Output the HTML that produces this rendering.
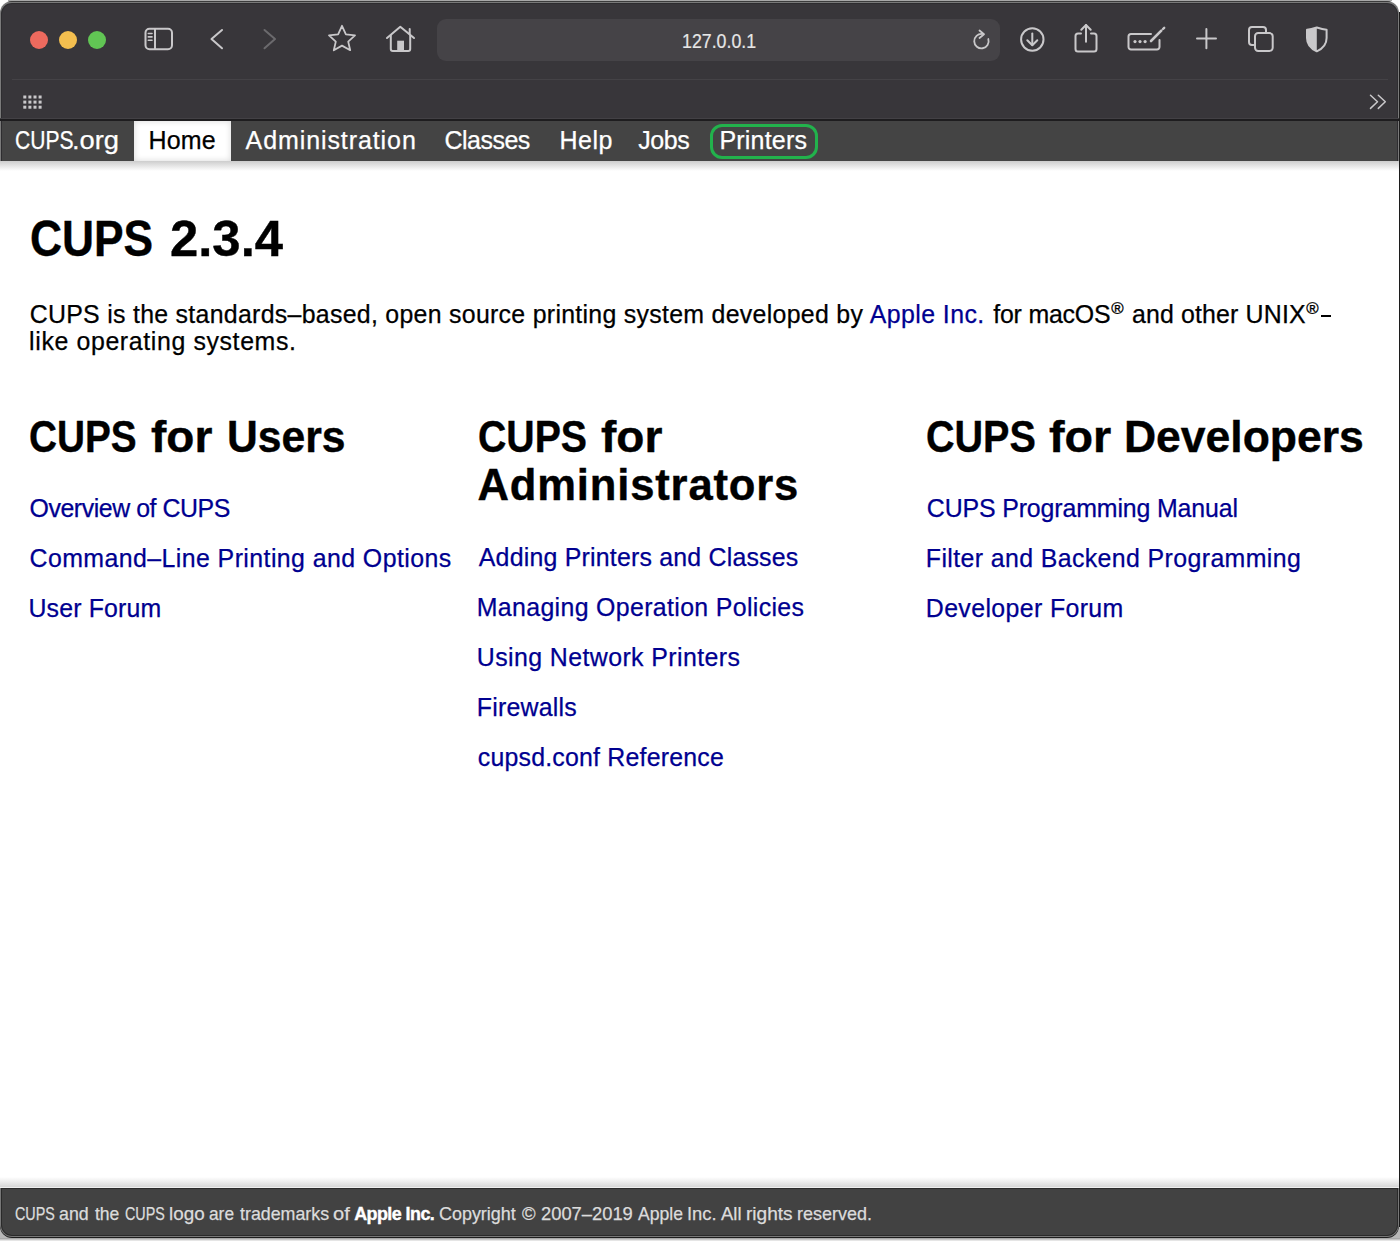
<!DOCTYPE html>
<html><head><meta charset="utf-8"><style>
html,body{margin:0;padding:0;width:1400px;height:1241px;overflow:hidden;background:#fff;}
body{position:relative;font-family:"Liberation Sans",sans-serif;}
.t{position:absolute;white-space:nowrap;line-height:normal;-webkit-text-stroke:0.2px currentColor;}
.r{position:absolute;}
svg{position:absolute;left:0;top:0;}
</style></head><body>

<div class="r" style="left:8px;top:0;width:1384px;height:1px;background:#a8a8a8;"></div>
<div class="r" style="left:0;top:1238px;width:1400px;height:3px;background:linear-gradient(#9a9a9a,#f4f4f4);"></div>
<div class="r" style="left:0;top:1215px;width:20px;height:23px;background:#b8b8b8;"></div>
<div class="r" style="left:1380px;top:1215px;width:20px;height:23px;background:#b8b8b8;"></div>
<div class="r" style="left:1399px;top:12px;width:1px;height:1215px;background:#1c1c1c;"></div>
<!-- top chrome -->
<div class="r" style="left:0;top:1px;width:1399px;height:160px;border-radius:12px 12px 0 0;background:#7a7a7a;overflow:hidden;">
  <div class="r" style="left:0;top:0;width:1399px;height:1px;background:#3c3c3c;"></div>
  <div class="r" style="left:1px;top:2px;width:1397px;height:158px;border-radius:11px 11px 0 0;background:#2e2d30;"></div>
  <div class="r" style="left:2px;top:3px;width:1395px;height:157px;border-radius:10px 10px 0 0;background:#38363a;"></div>
  <div class="r" style="left:0;top:117px;width:1399px;height:1px;background:#434145;"></div>
  <div class="r" style="left:0;top:118px;width:1399px;height:2px;background:#1e1d1f;"></div>
  <div class="r" style="left:2px;top:120px;width:1395px;height:40px;background:#444444;"></div>
</div>
<div class="r" style="left:0;top:161px;width:1399px;height:10px;background:linear-gradient(#cdcdcd,rgba(255,255,255,0));"></div>
<div class="r" style="left:0;top:1177px;width:1399px;height:10px;background:linear-gradient(rgba(255,255,255,0),#d6d6d6);"></div>
<!-- footer -->
<div class="r" style="left:0;top:1187px;width:1399px;height:51px;border-radius:0 0 12px 12px;background:#1e1e1e;overflow:hidden;">
  <div class="r" style="left:0;top:0;width:1399px;height:1px;background:#eeeeee;"></div>
  <div class="r" style="left:0;top:1px;width:1399px;height:49px;border-radius:0 0 12px 12px;background:#777;"></div>
  <div class="r" style="left:1px;top:1px;width:1397px;height:48px;border-radius:0 0 11px 11px;background:#2a2a2a;"></div>
  <div class="r" style="left:2px;top:2px;width:1395px;height:46px;border-radius:0 0 10px 10px;background:#424242;"></div>
</div>
<div class="r" style="left:12px;top:78.5px;width:1376px;height:1.5px;background:#444246;"></div>
<div class="r" style="left:437px;top:19px;width:563px;height:42px;border-radius:9px;background:#454347;"></div>
<div class="r" style="left:29.5px;top:30.8px;width:18px;height:18px;border-radius:50%;background:#ed6a5e;"></div>
<div class="r" style="left:58.900000000000006px;top:30.8px;width:18px;height:18px;border-radius:50%;background:#f4bf4f;"></div>
<div class="r" style="left:88.4px;top:30.8px;width:18px;height:18px;border-radius:50%;background:#61c554;"></div>
<div class="r" style="left:134px;top:121px;width:97px;height:40px;background:#fff;box-shadow:inset 0 0 6px #d8d8d8;"></div>
<div class="r" style="left:710px;top:124px;width:102px;height:28.5px;border:3px solid #22b24c;border-radius:12px;"></div>
<svg width="1400" height="125" viewBox="0 0 1400 125" fill="none" stroke="#c9c8ca" stroke-width="2" stroke-linecap="round" stroke-linejoin="round">
 <rect x="145.5" y="28.8" width="26.5" height="20.5" rx="4"/>
 <line x1="155" y1="29" x2="155" y2="49"/>
 <g stroke-width="1.6"><line x1="148.3" y1="33.5" x2="152" y2="33.5"/><line x1="148.3" y1="36.9" x2="152" y2="36.9"/><line x1="148.3" y1="40.2" x2="152" y2="40.2"/></g>
 <polyline points="222,30 211.5,39 222,48.3"/>
 <polyline points="264.5,30 275,39 264.5,48.3" stroke="#6b6a6d"/>
 <polygon stroke-width="1.8" points="342,25.8 345.9,34.4 355,35.4 348.2,41.6 350.2,50.2 342,45.6 333.8,50.2 335.8,41.6 329,35.4 338.1,34.4"/>
 <polyline points="387,38 400.3,26.8 414,38"/>
 <path d="M390.8 35.5 V49 a2 2 0 0 0 2 2 H408.2 a2 2 0 0 0 2 -2 V35.5"/>
 <line x1="409.7" y1="29" x2="409.7" y2="34"/>
 <rect x="397.2" y="40.7" width="6.8" height="10" fill="#c9c8ca" stroke="none"/>
 <path d="M982.2 34 A7.2 7.2 0 1 0 988.3 39" stroke-width="1.8"/>
 <polyline points="979.5,30.5 984,34.3 979.5,38" stroke-width="1.8"/>
 <circle cx="1032.3" cy="39.5" r="11.2"/>
 <line x1="1032.3" y1="33.5" x2="1032.3" y2="45"/>
 <polyline points="1027.3,40.3 1032.3,45.3 1037.3,40.3"/>
 <path d="M1081 33.5 H1078 a2.5 2.5 0 0 0 -2.5 2.5 V49 a2.5 2.5 0 0 0 2.5 2.5 H1094 a2.5 2.5 0 0 0 2.5 -2.5 V36 a2.5 2.5 0 0 0 -2.5 -2.5 H1091"/>
 <line x1="1086" y1="25" x2="1086" y2="41.8"/>
 <polyline points="1081.3,29.8 1086,25 1090.7,29.8"/>
 <path d="M1151 34 H1131 a2.5 2.5 0 0 0 -2.5 2.5 V47 a2.5 2.5 0 0 0 2.5 2.5 H1157 a2.5 2.5 0 0 0 2.5 -2.5 V40"/>
 <line x1="1151" y1="41" x2="1161.3" y2="30.7" stroke-width="2.6"/><line x1="1163" y1="29" x2="1164.2" y2="27.8" stroke-width="2.4"/>
 <g fill="#c9c8ca" stroke="none"><circle cx="1135" cy="41.6" r="1.6"/><circle cx="1140" cy="41.6" r="1.6"/><circle cx="1145.1" cy="41.6" r="1.6"/></g>
 <line x1="1197" y1="38.5" x2="1216" y2="38.5"/>
 <line x1="1206.4" y1="29" x2="1206.4" y2="48.2"/>
 <path d="M1253.5 44.9 H1252 a3 3 0 0 1 -3 -3 V30.1 a3 3 0 0 1 3 -3 H1263 a3 3 0 0 1 3 3 V32"/>
 <rect x="1255" y="33.1" width="17.7" height="17.8" rx="3.2"/>
 <path d="M1316.8 27.5 C1313 28.8 1309.5 29.6 1307 29.8 V38 C1307 44 1310.5 48.5 1316.8 51.3 C1323 48.5 1326.6 44 1326.6 38 V29.8 C1324 29.6 1320.6 28.8 1316.8 27.5 Z"/>
 <path d="M1316.8 27.5 C1313 28.8 1309.5 29.6 1307 29.8 V38 C1307 44 1310.5 48.5 1316.8 51.3 Z" fill="#c9c8ca" stroke="none"/>
 <g fill="#c9c8ca" stroke="none"><rect x="23.3" y="95.5" width="3" height="3"/><rect x="28.4" y="95.5" width="3" height="3"/><rect x="33.5" y="95.5" width="3" height="3"/><rect x="38.6" y="95.5" width="3" height="3"/><rect x="23.3" y="100.6" width="3" height="3"/><rect x="28.4" y="100.6" width="3" height="3"/><rect x="33.5" y="100.6" width="3" height="3"/><rect x="38.6" y="100.6" width="3" height="3"/><rect x="23.3" y="105.7" width="3" height="3"/><rect x="28.4" y="105.7" width="3" height="3"/><rect x="33.5" y="105.7" width="3" height="3"/><rect x="38.6" y="105.7" width="3" height="3"/></g>
 <g stroke-width="1.5"><polyline points="1370.5,95.2 1377.5,101.8 1370.5,108.4"/><polyline points="1378.3,95.2 1385.3,101.8 1378.3,108.4"/></g>
</svg>
<div class="t" style="left:14.76px;top:126.0px;font-size:25px;font-weight:normal;color:#fff;-webkit-text-stroke:0.25px currentColor;transform:scaleX(0.8433);transform-origin:0 0;">CUPS</div>
<div class="t" style="left:72.11px;top:126.0px;font-size:25px;font-weight:normal;color:#fff;-webkit-text-stroke:0.25px currentColor;transform:scaleX(1.0925);transform-origin:0 0;">.org</div>
<div class="t" style="left:245.6px;top:126.0px;font-size:25px;font-weight:normal;letter-spacing:0.908px;color:#fff;-webkit-text-stroke:0.25px currentColor;">Administration</div>
<div class="t" style="left:444.5px;top:126.0px;font-size:25px;font-weight:normal;letter-spacing:-0.517px;color:#fff;-webkit-text-stroke:0.25px currentColor;">Classes</div>
<div class="t" style="left:559.5px;top:126.0px;font-size:25px;font-weight:normal;letter-spacing:0.467px;color:#fff;-webkit-text-stroke:0.25px currentColor;">Help</div>
<div class="t" style="left:638.2px;top:126.0px;font-size:25px;font-weight:normal;letter-spacing:-0.433px;color:#fff;-webkit-text-stroke:0.25px currentColor;">Jobs</div>
<div class="t" style="left:719.5px;top:126.0px;font-size:25px;font-weight:normal;letter-spacing:0.186px;color:#fff;-webkit-text-stroke:0.25px currentColor;">Printers</div>
<div class="t" style="left:148.4px;top:126.0px;font-size:25px;font-weight:normal;letter-spacing:0.2px;color:#000;-webkit-text-stroke:0.25px currentColor;">Home</div>
<div class="t" style="left:681.8240000000001px;top:30.0px;font-size:20.3px;color:#e6e6e6;transform:scaleX(0.876);transform-origin:0 0;">127.0.0.1</div>
<div class="t" style="left:29.81px;top:209.7px;font-size:49.4px;font-weight:bold;color:#000;-webkit-text-stroke:0.4px currentColor;transform:scaleX(0.897);transform-origin:0 0;">CUPS</div>
<div class="t" style="left:169.64px;top:209.7px;font-size:49.4px;font-weight:bold;color:#000;-webkit-text-stroke:0.4px currentColor;transform:scaleX(1.0287);transform-origin:0 0;">2.3.4</div>
<div class="t" style="left:29.7px;top:300.0px;font-size:24.9px;font-weight:normal;letter-spacing:0.288px;color:#000;-webkit-text-stroke:0.25px currentColor;">CUPS is the standards–based, open source printing system developed by</div>
<div class="t" style="left:869.7px;top:300.0px;font-size:24.9px;font-weight:normal;letter-spacing:0.433px;color:#000090;-webkit-text-stroke:0.25px currentColor;">Apple Inc.</div>
<div class="t" style="left:993.2px;top:300.0px;font-size:24.9px;font-weight:normal;letter-spacing:-0.188px;color:#000;-webkit-text-stroke:0.25px currentColor;">for macOS</div>
<div class="t" style="left:1131.9px;top:300.0px;font-size:24.9px;font-weight:normal;letter-spacing:0.162px;color:#000;-webkit-text-stroke:0.25px currentColor;">and other UNIX</div>
<div class="t" style="left:29.1px;top:326.5px;font-size:24.9px;font-weight:normal;letter-spacing:0.623px;color:#000;-webkit-text-stroke:0.25px currentColor;">like operating systems.</div>
<div class="t" style="left:1111.2px;top:299.2px;font-size:16.8px;color:#000;-webkit-text-stroke:0.35px #000;">®</div>
<div class="t" style="left:1306.2px;top:299.2px;font-size:16.8px;color:#000;-webkit-text-stroke:0.35px #000;">®</div>
<div class="r" style="left:1321px;top:315.3px;width:10.3px;height:2px;background:#000;"></div>
<div class="t" style="left:29.12px;top:412.7px;font-size:43.6px;font-weight:bold;color:#000;-webkit-text-stroke:0.4px currentColor;transform:scaleX(0.889);transform-origin:0 0;">CUPS</div>
<div class="t" style="left:151.35px;top:412.7px;font-size:43.6px;font-weight:bold;color:#000;-webkit-text-stroke:0.4px currentColor;transform:scaleX(1.0544);transform-origin:0 0;">for</div>
<div class="t" style="left:227.27px;top:412.7px;font-size:43.6px;font-weight:bold;color:#000;-webkit-text-stroke:0.4px currentColor;transform:scaleX(0.9778);transform-origin:0 0;">Users</div>
<div class="t" style="left:477.60px;top:412.7px;font-size:43.6px;font-weight:bold;color:#000;-webkit-text-stroke:0.4px currentColor;transform:scaleX(0.9);transform-origin:0 0;">CUPS</div>
<div class="t" style="left:600.94px;top:412.7px;font-size:43.6px;font-weight:bold;color:#000;-webkit-text-stroke:0.4px currentColor;transform:scaleX(1.0561);transform-origin:0 0;">for</div>
<div class="t" style="left:926.19px;top:412.7px;font-size:43.6px;font-weight:bold;color:#000;-webkit-text-stroke:0.4px currentColor;transform:scaleX(0.9068);transform-origin:0 0;">CUPS</div>
<div class="t" style="left:1049.13px;top:412.7px;font-size:43.6px;font-weight:bold;color:#000;-webkit-text-stroke:0.4px currentColor;transform:scaleX(1.0719);transform-origin:0 0;">for</div>
<div class="t" style="left:1124.24px;top:412.7px;font-size:43.6px;font-weight:bold;color:#000;-webkit-text-stroke:0.4px currentColor;transform:scaleX(1.0204);transform-origin:0 0;">Developers</div>
<div class="t" style="left:477.4px;top:461.4px;font-size:43.6px;font-weight:bold;letter-spacing:0.838px;color:#000;-webkit-text-stroke:0.4px currentColor;">Administrators</div>
<div class="t" style="left:29.5px;top:494.4px;font-size:24.9px;font-weight:normal;letter-spacing:-0.44px;color:#000090;-webkit-text-stroke:0.25px currentColor;">Overview of CUPS</div>
<div class="t" style="left:29.5px;top:544.4px;font-size:24.9px;font-weight:normal;letter-spacing:0.422px;color:#000090;-webkit-text-stroke:0.25px currentColor;">Command–Line Printing and Options</div>
<div class="t" style="left:28.5px;top:594.4px;font-size:24.9px;font-weight:normal;letter-spacing:0.144px;color:#000090;-webkit-text-stroke:0.25px currentColor;">User Forum</div>
<div class="t" style="left:478.8px;top:543.4px;font-size:24.9px;font-weight:normal;letter-spacing:0.208px;color:#000090;-webkit-text-stroke:0.25px currentColor;">Adding Printers and Classes</div>
<div class="t" style="left:476.8px;top:593.4px;font-size:24.9px;font-weight:normal;letter-spacing:0.342px;color:#000090;-webkit-text-stroke:0.25px currentColor;">Managing Operation Policies</div>
<div class="t" style="left:476.8px;top:643.4px;font-size:24.9px;font-weight:normal;letter-spacing:0.41px;color:#000090;-webkit-text-stroke:0.25px currentColor;">Using Network Printers</div>
<div class="t" style="left:476.8px;top:693.4px;font-size:24.9px;font-weight:normal;letter-spacing:0.2px;color:#000090;-webkit-text-stroke:0.25px currentColor;">Firewalls</div>
<div class="t" style="left:477.8px;top:743.4px;font-size:24.9px;font-weight:normal;letter-spacing:0.205px;color:#000090;-webkit-text-stroke:0.25px currentColor;">cupsd.conf Reference</div>
<div class="t" style="left:926.8px;top:494.4px;font-size:24.9px;font-weight:normal;letter-spacing:-0.127px;color:#000090;-webkit-text-stroke:0.25px currentColor;">CUPS Programming Manual</div>
<div class="t" style="left:925.8px;top:544.4px;font-size:24.9px;font-weight:normal;letter-spacing:0.386px;color:#000090;-webkit-text-stroke:0.25px currentColor;">Filter and Backend Programming</div>
<div class="t" style="left:925.8px;top:594.4px;font-size:24.9px;font-weight:normal;letter-spacing:0.371px;color:#000090;-webkit-text-stroke:0.25px currentColor;">Developer Forum</div>
<div class="t" style="left:14.70px;top:1203.6px;font-size:17.9px;font-weight:normal;color:#dcdcdc;-webkit-text-stroke:0.25px currentColor;transform:scaleX(0.8021);transform-origin:0 0;">CUPS</div>
<div class="t" style="left:59.01px;top:1203.6px;font-size:17.9px;font-weight:normal;color:#dcdcdc;-webkit-text-stroke:0.25px currentColor;transform:scaleX(0.9929);transform-origin:0 0;">and</div>
<div class="t" style="left:94.90px;top:1203.6px;font-size:17.9px;font-weight:normal;color:#dcdcdc;-webkit-text-stroke:0.25px currentColor;transform:scaleX(0.9792);transform-origin:0 0;">the</div>
<div class="t" style="left:124.70px;top:1203.6px;font-size:17.9px;font-weight:normal;color:#dcdcdc;-webkit-text-stroke:0.25px currentColor;transform:scaleX(0.8021);transform-origin:0 0;">CUPS</div>
<div class="t" style="left:169.25px;top:1203.6px;font-size:17.9px;font-weight:normal;color:#dcdcdc;-webkit-text-stroke:0.25px currentColor;transform:scaleX(1.0531);transform-origin:0 0;">logo</div>
<div class="t" style="left:209.43px;top:1203.6px;font-size:17.9px;font-weight:normal;color:#dcdcdc;-webkit-text-stroke:0.25px currentColor;transform:scaleX(0.9667);transform-origin:0 0;">are</div>
<div class="t" style="left:239.60px;top:1203.6px;font-size:17.9px;font-weight:normal;color:#dcdcdc;-webkit-text-stroke:0.25px currentColor;transform:scaleX(0.9955);transform-origin:0 0;">trademarks</div>
<div class="t" style="left:333.18px;top:1203.6px;font-size:17.9px;font-weight:normal;color:#dcdcdc;-webkit-text-stroke:0.25px currentColor;transform:scaleX(1.1214);transform-origin:0 0;">of</div>
<div class="t" style="left:438.80px;top:1203.6px;font-size:17.9px;font-weight:normal;color:#dcdcdc;-webkit-text-stroke:0.25px currentColor;transform:scaleX(1.0026);transform-origin:0 0;">Copyright</div>
<div class="t" style="left:522.00px;top:1203.6px;font-size:17.9px;font-weight:normal;color:#dcdcdc;-webkit-text-stroke:0.25px currentColor;transform:scaleX(1.0308);transform-origin:0 0;">©</div>
<div class="t" style="left:540.58px;top:1203.6px;font-size:17.9px;font-weight:normal;color:#dcdcdc;-webkit-text-stroke:0.25px currentColor;transform:scaleX(1.025);transform-origin:0 0;">2007–2019</div>
<div class="t" style="left:637.90px;top:1203.6px;font-size:17.9px;font-weight:normal;color:#dcdcdc;-webkit-text-stroke:0.25px currentColor;transform:scaleX(0.9822);transform-origin:0 0;">Apple</div>
<div class="t" style="left:687.24px;top:1203.6px;font-size:17.9px;font-weight:normal;color:#dcdcdc;-webkit-text-stroke:0.25px currentColor;transform:scaleX(1.028);transform-origin:0 0;">Inc.</div>
<div class="t" style="left:721.40px;top:1203.6px;font-size:17.9px;font-weight:normal;color:#dcdcdc;-webkit-text-stroke:0.25px currentColor;transform:scaleX(1.0316);transform-origin:0 0;">All</div>
<div class="t" style="left:746.13px;top:1203.6px;font-size:17.9px;font-weight:normal;color:#dcdcdc;-webkit-text-stroke:0.25px currentColor;transform:scaleX(1.0667);transform-origin:0 0;">rights</div>
<div class="t" style="left:797.30px;top:1203.6px;font-size:17.9px;font-weight:normal;color:#dcdcdc;-webkit-text-stroke:0.25px currentColor;transform:scaleX(1.0042);transform-origin:0 0;">reserved.</div>
<div class="t" style="left:354.2px;top:1203.6px;font-size:17.9px;font-weight:bold;letter-spacing:-0.544px;color:#fff;-webkit-text-stroke:0.4px currentColor;">Apple Inc.</div>
</body></html>
